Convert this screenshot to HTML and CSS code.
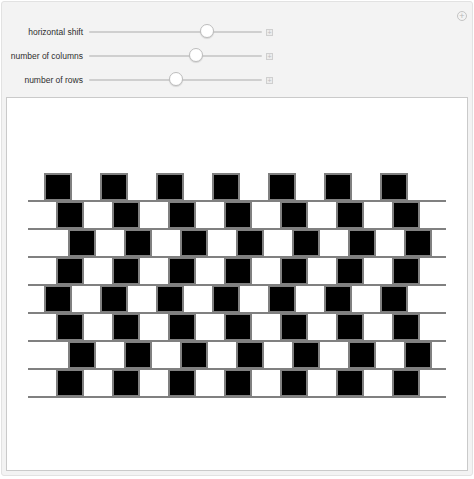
FILE: index.html
```html
<!DOCTYPE html>
<html lang="en">
<head>
  <meta charset="UTF-8" />
  <title>Cafe Wall Illusion</title>
  <link rel="stylesheet" href="styles.css">
</head>
<body>

  <div class="panel">
    <span class="add-icon">+</span>

    <div class="controls">
      <div class="control">
        <label>horizontal shift</label>
        <div class="slider"><span class="thumb" style="left: 111px"></span></div>
        <span class="step">+</span>
      </div>
      <div class="control">
        <label>number of columns</label>
        <div class="slider"><span class="thumb" style="left: 100px"></span></div>
        <span class="step">+</span>
      </div>
      <div class="control">
        <label>number of rows</label>
        <div class="slider"><span class="thumb" style="left: 80px"></span></div>
        <span class="step">+</span>
      </div>
    </div>

    <div class="pane">
      <svg class="wall" width="460" height="372" viewBox="7 98 460 372">
        <defs>
          <g id="tiles" fill="#000" stroke="#808080" stroke-width="2">
            <rect class="tile" x="1" y="1" width="26" height="26" />
            <rect class="tile" x="57" y="1" width="26" height="26" />
            <rect class="tile" x="113" y="1" width="26" height="26" />
            <rect class="tile" x="169" y="1" width="26" height="26" />
            <rect class="tile" x="225" y="1" width="26" height="26" />
            <rect class="tile" x="281" y="1" width="26" height="26" />
            <rect class="tile" x="337" y="1" width="26" height="26" />
          </g>
        </defs>
        <use href="#tiles" x="44" y="173" />
        <use href="#tiles" x="56" y="201" />
        <use href="#tiles" x="68" y="229" />
        <use href="#tiles" x="56" y="257" />
        <use href="#tiles" x="44" y="285" />
        <use href="#tiles" x="56" y="313" />
        <use href="#tiles" x="68" y="341" />
        <use href="#tiles" x="56" y="369" />
        <path class="mortar" d="M28 201H446M28 229H446M28 257H446M28 285H446M28 313H446M28 341H446M28 369H446M28 397H446" />
      </svg>
    </div>
  </div>

</body>
</html>
```

FILE: styles.css
```css
body {
  margin: 0;
  background: #fff;
  font-family: "Liberation Sans", Arial, sans-serif;
}
.panel {
  position: relative;
  margin: 1px;
  height: 475px;
  background: #f3f3f3;
  border: 1px solid #e2e2e2;
  border-radius: 3px;
  box-sizing: border-box;
}
.add-icon {
  position: absolute;
  top: 9px;
  right: 5px;
  width: 8px;
  height: 8px;
  border: 1px solid #c4c4c4;
  border-radius: 50%;
  color: #b8b8b8;
  font-size: 9px;
  line-height: 8px;
  text-align: center;
}
.controls {
  padding-top: 18px;
  margin-bottom: 5px;
}
.control {
  display: flex;
  align-items: center;
  height: 24px;
}
.control label {
  width: 81px;
  text-align: right;
  font-size: 8.5px;
  color: #2e2e2e;
}
.slider {
  position: relative;
  width: 173px;
  height: 2px;
  margin-left: 6px;
  background: #cfcfcf;
  border-radius: 1px;
}
.thumb {
  position: absolute;
  top: -7px;
  width: 14px;
  height: 14px;
  box-sizing: border-box;
  background: #fff;
  border: 1px solid #bdbdbd;
  border-radius: 50%;
  box-shadow: 0 1px 1px rgba(0,0,0,0.12);
}
.step {
  width: 7px;
  height: 7px;
  margin-left: 4px;
  box-sizing: border-box;
  border: 1px solid #cfcfcf;
  background: #ececec;
  color: #bcbcbc;
  font-size: 7px;
  line-height: 5px;
  text-align: center;
}
.pane {
  margin: 0 4px;
  height: 374px;
  background: #fff;
  border: 1px solid #cacaca;
  box-sizing: border-box;
}
.wall {
  display: block;
}
.mortar {
  stroke: #808080;
  stroke-width: 2;
  fill: none;
}
```
